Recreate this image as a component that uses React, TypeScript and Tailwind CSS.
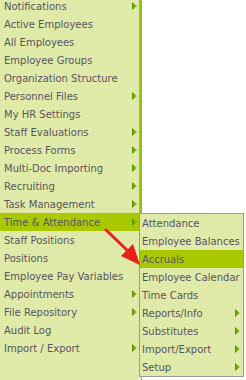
import React from 'react';

const mainItems: { label: string; sub?: boolean; active?: boolean }[] = [
  { label: 'Notifications', sub: true },
  { label: 'Active Employees' },
  { label: 'All Employees' },
  { label: 'Employee Groups' },
  { label: 'Organization Structure' },
  { label: 'Personnel Files', sub: true },
  { label: 'My HR Settings' },
  { label: 'Staff Evaluations', sub: true },
  { label: 'Process Forms', sub: true },
  { label: 'Multi-Doc Importing', sub: true },
  { label: 'Recruiting', sub: true },
  { label: 'Task Management', sub: true },
  { label: 'Time & Attendance', sub: true, active: true },
  { label: 'Staff Positions' },
  { label: 'Positions' },
  { label: 'Employee Pay Variables' },
  { label: 'Appointments', sub: true },
  { label: 'File Repository', sub: true },
  { label: 'Audit Log' },
  { label: 'Import / Export', sub: true },
];

const subItems: { label: string; sub?: boolean; active?: boolean }[] = [
  { label: 'Attendance' },
  { label: 'Employee Balances' },
  { label: 'Accruals', active: true },
  { label: 'Employee Calendar' },
  { label: 'Time Cards' },
  { label: 'Reports/Info', sub: true },
  { label: 'Substitutes', sub: true },
  { label: 'Import/Export', sub: true },
  { label: 'Setup', sub: true },
];

const Caret = () => (
  <svg width="5" height="8" viewBox="0 0 5 8" className="shrink-0">
    <defs>
      <linearGradient id="cg" x1="0" y1="0" x2="1" y2="0">
        <stop offset="0" stopColor="#5e8c00" />
        <stop offset="1" stopColor="#9cc92a" />
      </linearGradient>
    </defs>
    <polygon points="0,0 5,4 0,8" fill="url(#cg)" />
  </svg>
);

export default function App() {
  return (
    <div className="relative w-[246px] h-[380px] overflow-hidden bg-white text-[10px] text-[#5a5660] [font-family:'DejaVu_Sans',Verdana,sans-serif]">
      <div className="flex">
        <div className="w-[139px] mt-[-3px] bg-[#dfe9a8] flex flex-col">
          {mainItems.map((it) => (
            <div
              key={it.label}
              className={`h-[18px] flex items-center justify-between pl-[4px] pr-[2px] whitespace-nowrap ${
                it.active ? 'bg-[#a9c800]' : ''
              }`}
            >
              <span>{it.label}</span>
              {it.sub && <Caret />}
            </div>
          ))}
        </div>
        <div className="w-[2px] h-[357px] bg-[#9fc31a]" />
        <div className="w-[1px] h-[380px] bg-[#f08a1c]" />
      </div>

      {/* flyout */}
      <div className="absolute left-[139px] top-[213px] w-[105px] bg-[#dfe9a8] border border-[#9a9a9a]">
        {subItems.map((it) => (
          <div
            key={it.label}
            className={`h-[18px] flex items-center justify-between pl-[2px] pr-[3px] whitespace-nowrap ${
              it.active ? 'bg-[#a9c800]' : ''
            }`}
          >
            <span>{it.label}</span>
            {it.sub && <Caret />}
          </div>
        ))}
      </div>

      {/* red pointer */}
      <svg className="absolute left-0 top-0" width="246" height="380" viewBox="0 0 246 380">
        <line x1="105" y1="229" x2="129" y2="252" stroke="#e8201c" strokeWidth="3" />
        <polygon points="140,265 121,256 133,244" fill="#e8201c" />
      </svg>
    </div>
  );
}
